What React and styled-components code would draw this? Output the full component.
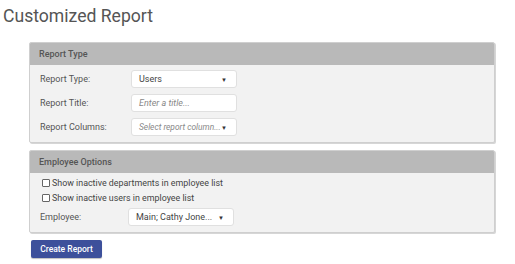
import React from "react";
import styled, { createGlobalStyle } from "styled-components";

const Global = createGlobalStyle`
  html, body { margin: 0; padding: 0; background: #fff; }
  body { font-family: Roboto, "Liberation Sans", Arial, sans-serif; color: #444; }
`;

const Page = styled.div`
  width: 515px;
  height: 264px;
  overflow: hidden;
  box-sizing: border-box;
  padding: 5px 20px 0 3px;
`;

const Title = styled.h1`
  margin: 0 0 15px 0;
  font-size: 17.6px;
  font-weight: 400;
  line-height: 22px;
  color: #555;
`;

const Content = styled.div`
  margin-left: 26px;
  display: flex;
  flex-direction: column;
  gap: 7px;
`;

const Panel = styled.section`
  border: 1px solid #cfcfcf;
  border-radius: 2px;
  box-shadow: 1px 1px 0 #d6d6d6;
  background: #f2f2f2;
  overflow: hidden;
`;

const PanelHeader = styled.div`
  background: #b9b9b9;
  height: 22px;
  display: flex;
  align-items: center;
  padding-left: 9px;
  font-size: 9px;
  font-weight: 500;
  color: #555;
`;

const PanelBody = styled.div`
  display: flex;
  flex-direction: column;
  gap: ${(p) => p.$gap ?? 6}px;
  padding: ${(p) => p.$pad || "5px 0 6px 10px"};
`;

const Row = styled.div`
  display: flex;
  align-items: center;
  height: 18px;
  margin-top: ${(p) => p.$mt || 0}px;
`;

const Label = styled.div`
  width: ${(p) => p.$w || 91}px;
  font-size: 9px;
  color: #555;
`;

const Field = styled.div`
  box-sizing: border-box;
  width: 106px;
  height: 18px;
  background: #fff;
  border: 1px solid #e0e0e0;
  border-radius: 3px;
  display: flex;
  align-items: center;
  justify-content: space-between;
  padding: 0 7px;
  font-size: 9px;
  color: ${(p) => (p.$placeholder ? "#888" : "#444")};
  font-style: ${(p) => (p.$placeholder ? "italic" : "normal")};
  white-space: nowrap;
`;

const FieldText = styled.span`
  font-size: ${(p) => p.$fs || 9}px;
`;

const Arrow = styled.span`
  font-size: 6px;
  color: #333;
  font-style: normal;
  padding-right: 2px;
`;

const CheckRow = styled.label`
  display: flex;
  align-items: center;
  height: 13px;
  font-size: 8.9px;
  color: #444;
  padding-left: 2px;
`;

const Box = styled.span`
  box-sizing: border-box;
  width: 8px;
  height: 8px;
  border: 1px solid #666;
  border-radius: 1px;
  background: #fff;
  margin-right: 2px;
`;

const Button = styled.button`
  align-self: flex-start;
  margin-left: 2px;
  width: 71px;
  height: 18px;
  border: none;
  border-radius: 2px;
  background: #3d509b;
  color: #fff;
  font-family: inherit;
  font-size: 8.5px;
  font-weight: 500;
  padding: 0;
  box-shadow: 0 1px 1px rgba(0,0,0,0.25);
`;

const Select = ({ children, placeholder, fs }) => (
  <Field $placeholder={placeholder}>
    <FieldText $fs={fs}>{children}</FieldText>
    <Arrow>▼</Arrow>
  </Field>
);

export default function App() {
  return (
    <Page>
      <Global />
      <Title>Customized Report</Title>
      <Content>
        <Panel>
          <PanelHeader>Report Type</PanelHeader>
          <PanelBody>
            <Row>
              <Label>Report Type:</Label>
              <Select>Users</Select>
            </Row>
            <Row>
              <Label>Report Title:</Label>
              <Field $placeholder>Enter a title...</Field>
            </Row>
            <Row>
              <Label>Report Columns:</Label>
              <Select placeholder fs={8.4}>Select report column...</Select>
            </Row>
          </PanelBody>
        </Panel>
        <Panel>
          <PanelHeader>Employee Options</PanelHeader>
          <PanelBody $gap={2} $pad="3px 0 6px 10px">
            <CheckRow><Box />Show inactive departments in employee list</CheckRow>
            <CheckRow><Box />Show inactive users in employee list</CheckRow>
            <Row $mt={2}>
              <Label $w={88}>Employee:</Label>
              <Select>Main; Cathy Jone...</Select>
            </Row>
          </PanelBody>
        </Panel>
        <Button>Create Report</Button>
      </Content>
    </Page>
  );
}
